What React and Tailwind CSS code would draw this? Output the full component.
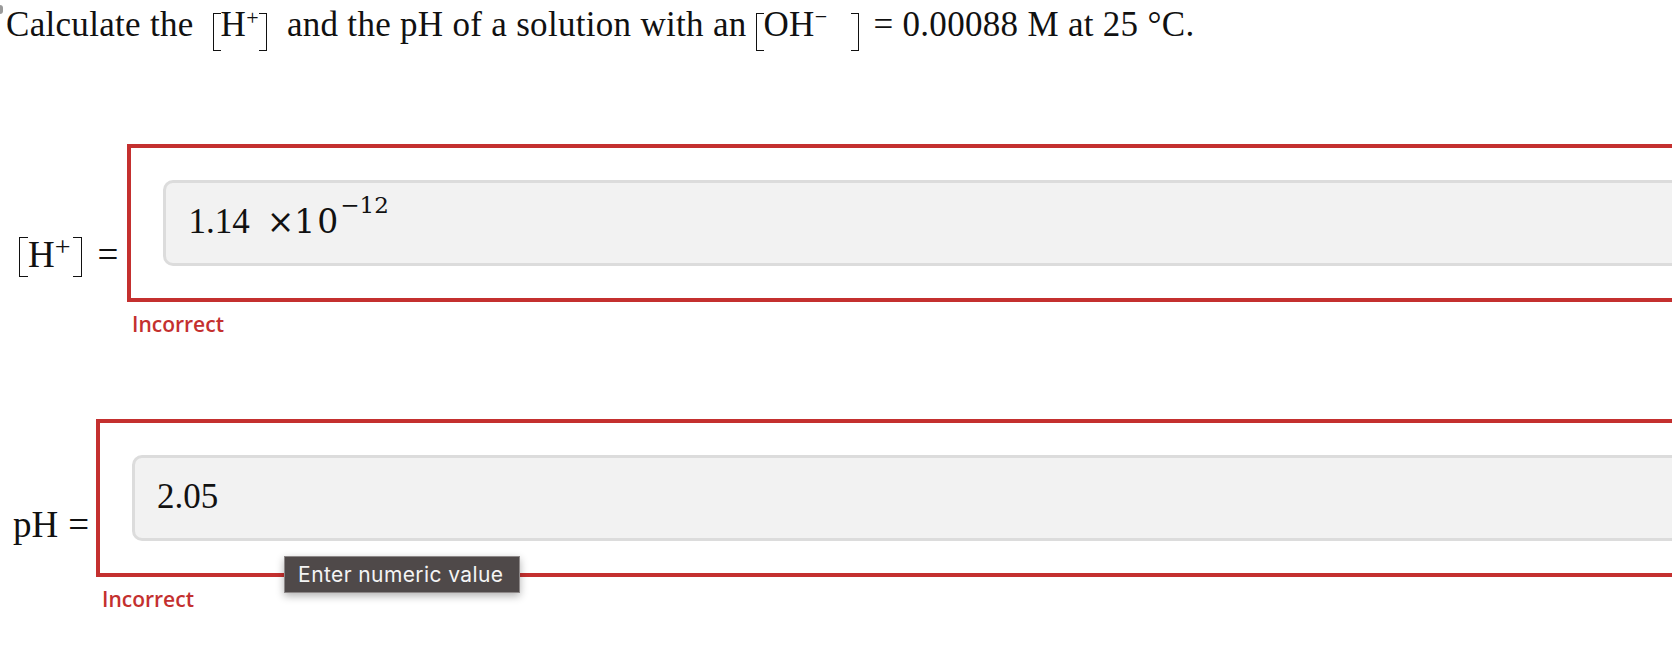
import React from 'react';

const serif = "font-['Liberation_Serif','Times_New_Roman',serif]";
const mathSerif = "font-['DejaVu_Serif','Liberation_Serif',serif]";
const sans = "font-['Open_Sans',sans-serif]";

// stretched square brackets around an ion formula (header size)
function Bracket({ side }) {
  return side === 'left' ? (
    <span className="inline-block h-[38px] w-[8px] align-[-15px] border-l-[1.5px] border-y-[1.5px] border-[#111]" />
  ) : (
    <span className="inline-block h-[38px] w-[8px] align-[-15px] border-r-[1.5px] border-y-[1.5px] border-[#111]" />
  );
}

// slightly larger brackets for the answer labels
function BigBracket({ side }) {
  return side === 'left' ? (
    <span className="inline-block h-[40px] w-[9px] align-[-10px] border-l-[1.5px] border-y-[1.5px] border-[#111]" />
  ) : (
    <span className="inline-block h-[40px] w-[9px] align-[-10px] border-r-[1.5px] border-y-[1.5px] border-[#111]" />
  );
}

function Incorrect({ indent }) {
  return (
    <div className={`${indent} mt-[12px] ${sans} font-semibold text-[21px] leading-none text-[#c4302f]`}>
      Incorrect
    </div>
  );
}

export default function App() {
  return (
    <div className="relative w-[1672px] h-[660px] overflow-hidden bg-white text-[#111]">
      {/* clipped widget corner at the top-left edge */}
      <span className="absolute left-0 top-[5px] h-[9px] w-[3px] rounded-r-full bg-[#9a9a9a]" />

      <p className={`${serif} h-[50px] pt-[7px] pl-[6px] text-[35px] leading-none tracking-[0.3px] whitespace-nowrap`}>
        <span>Calculate the</span>
        <span className="ml-[19px] mr-[20px]">
          <Bracket side="left" />
          <span>H</span>
          <sup className="text-[22px] -top-[11px]">+</sup>
          <Bracket side="right" />
        </span>
        <span>and the pH of a solution with an</span>
        <span className="ml-[9px] mr-[14px]">
          <Bracket side="left" />
          <span>OH</span>
          <sup className="text-[22px] -top-[12px]">−</sup>
          <span className="inline-block w-[24px]" />
          <Bracket side="right" />
        </span>
        <span>= 0.00088 M at 25 °C.</span>
      </p>

      {/* [H+] answer */}
      <div className="mt-[94px]">
        <div className="flex items-start">
          <div className={`${serif} mt-[92px] pl-[19px] mr-[9px] text-[37px] leading-none whitespace-nowrap`}>
            <BigBracket side="left" />
            <span>H</span>
            <sup className="text-[28px] -top-[11px]">+</sup>
            <span className="inline-block w-[2px]" />
            <BigBracket side="right" />
            <span className="ml-[16px]">=</span>
          </div>
          <div className="w-[1700px] shrink-0 border-4 border-[#c4302f] p-8">
            <div className="h-[86px] rounded-[10px] border-[3px] border-[#dcdcdc] bg-[#f2f2f2] pl-[22px] pt-[21px]">
              <span className={`${serif} text-[35px] leading-none whitespace-nowrap`}>
                <span>1.14</span>
                <span className={`${mathSerif} ml-[17px] text-[33px]`}>×</span>
                <span className={`${mathSerif} tracking-[2px] text-[33px]`}>10</span>
                <sup className={`${mathSerif} text-[23px] -top-[20px]`}>−12</sup>
              </span>
            </div>
          </div>
        </div>
        <Incorrect indent="pl-[132px]" />
      </div>

      {/* pH answer */}
      <div className="mt-[84px]">
        <div className="flex items-start">
          <div className={`${serif} mt-[87px] pl-[13px] mr-[7px] text-[37px] leading-none whitespace-nowrap`}>
            <span>pH</span>
            <span className="ml-[10px]">=</span>
          </div>
          <div className="relative w-[1700px] shrink-0 border-4 border-[#c4302f] p-8">
            <div className="h-[86px] rounded-[10px] border-[3px] border-[#dcdcdc] bg-[#f2f2f2] pl-[22px] pt-[21px]">
              <span className={`${serif} text-[35px] leading-none`}>2.05</span>
            </div>
            {/* validation tooltip sitting over the bottom border */}
            <div className="absolute left-[184px] top-[133px] z-10 flex h-[37px] w-[236px] items-center border border-[#8d8888] bg-[#4f4949] pl-[13px] shadow-[0_3px_8px_rgba(0,0,0,0.3)]">
              <span className="font-['Inter',sans-serif] text-[21px] leading-none tracking-[0.4px] text-[#f4f4f4] whitespace-nowrap">
                Enter numeric value
              </span>
            </div>
          </div>
        </div>
        <Incorrect indent="pl-[102px]" />
      </div>
    </div>
  );
}
